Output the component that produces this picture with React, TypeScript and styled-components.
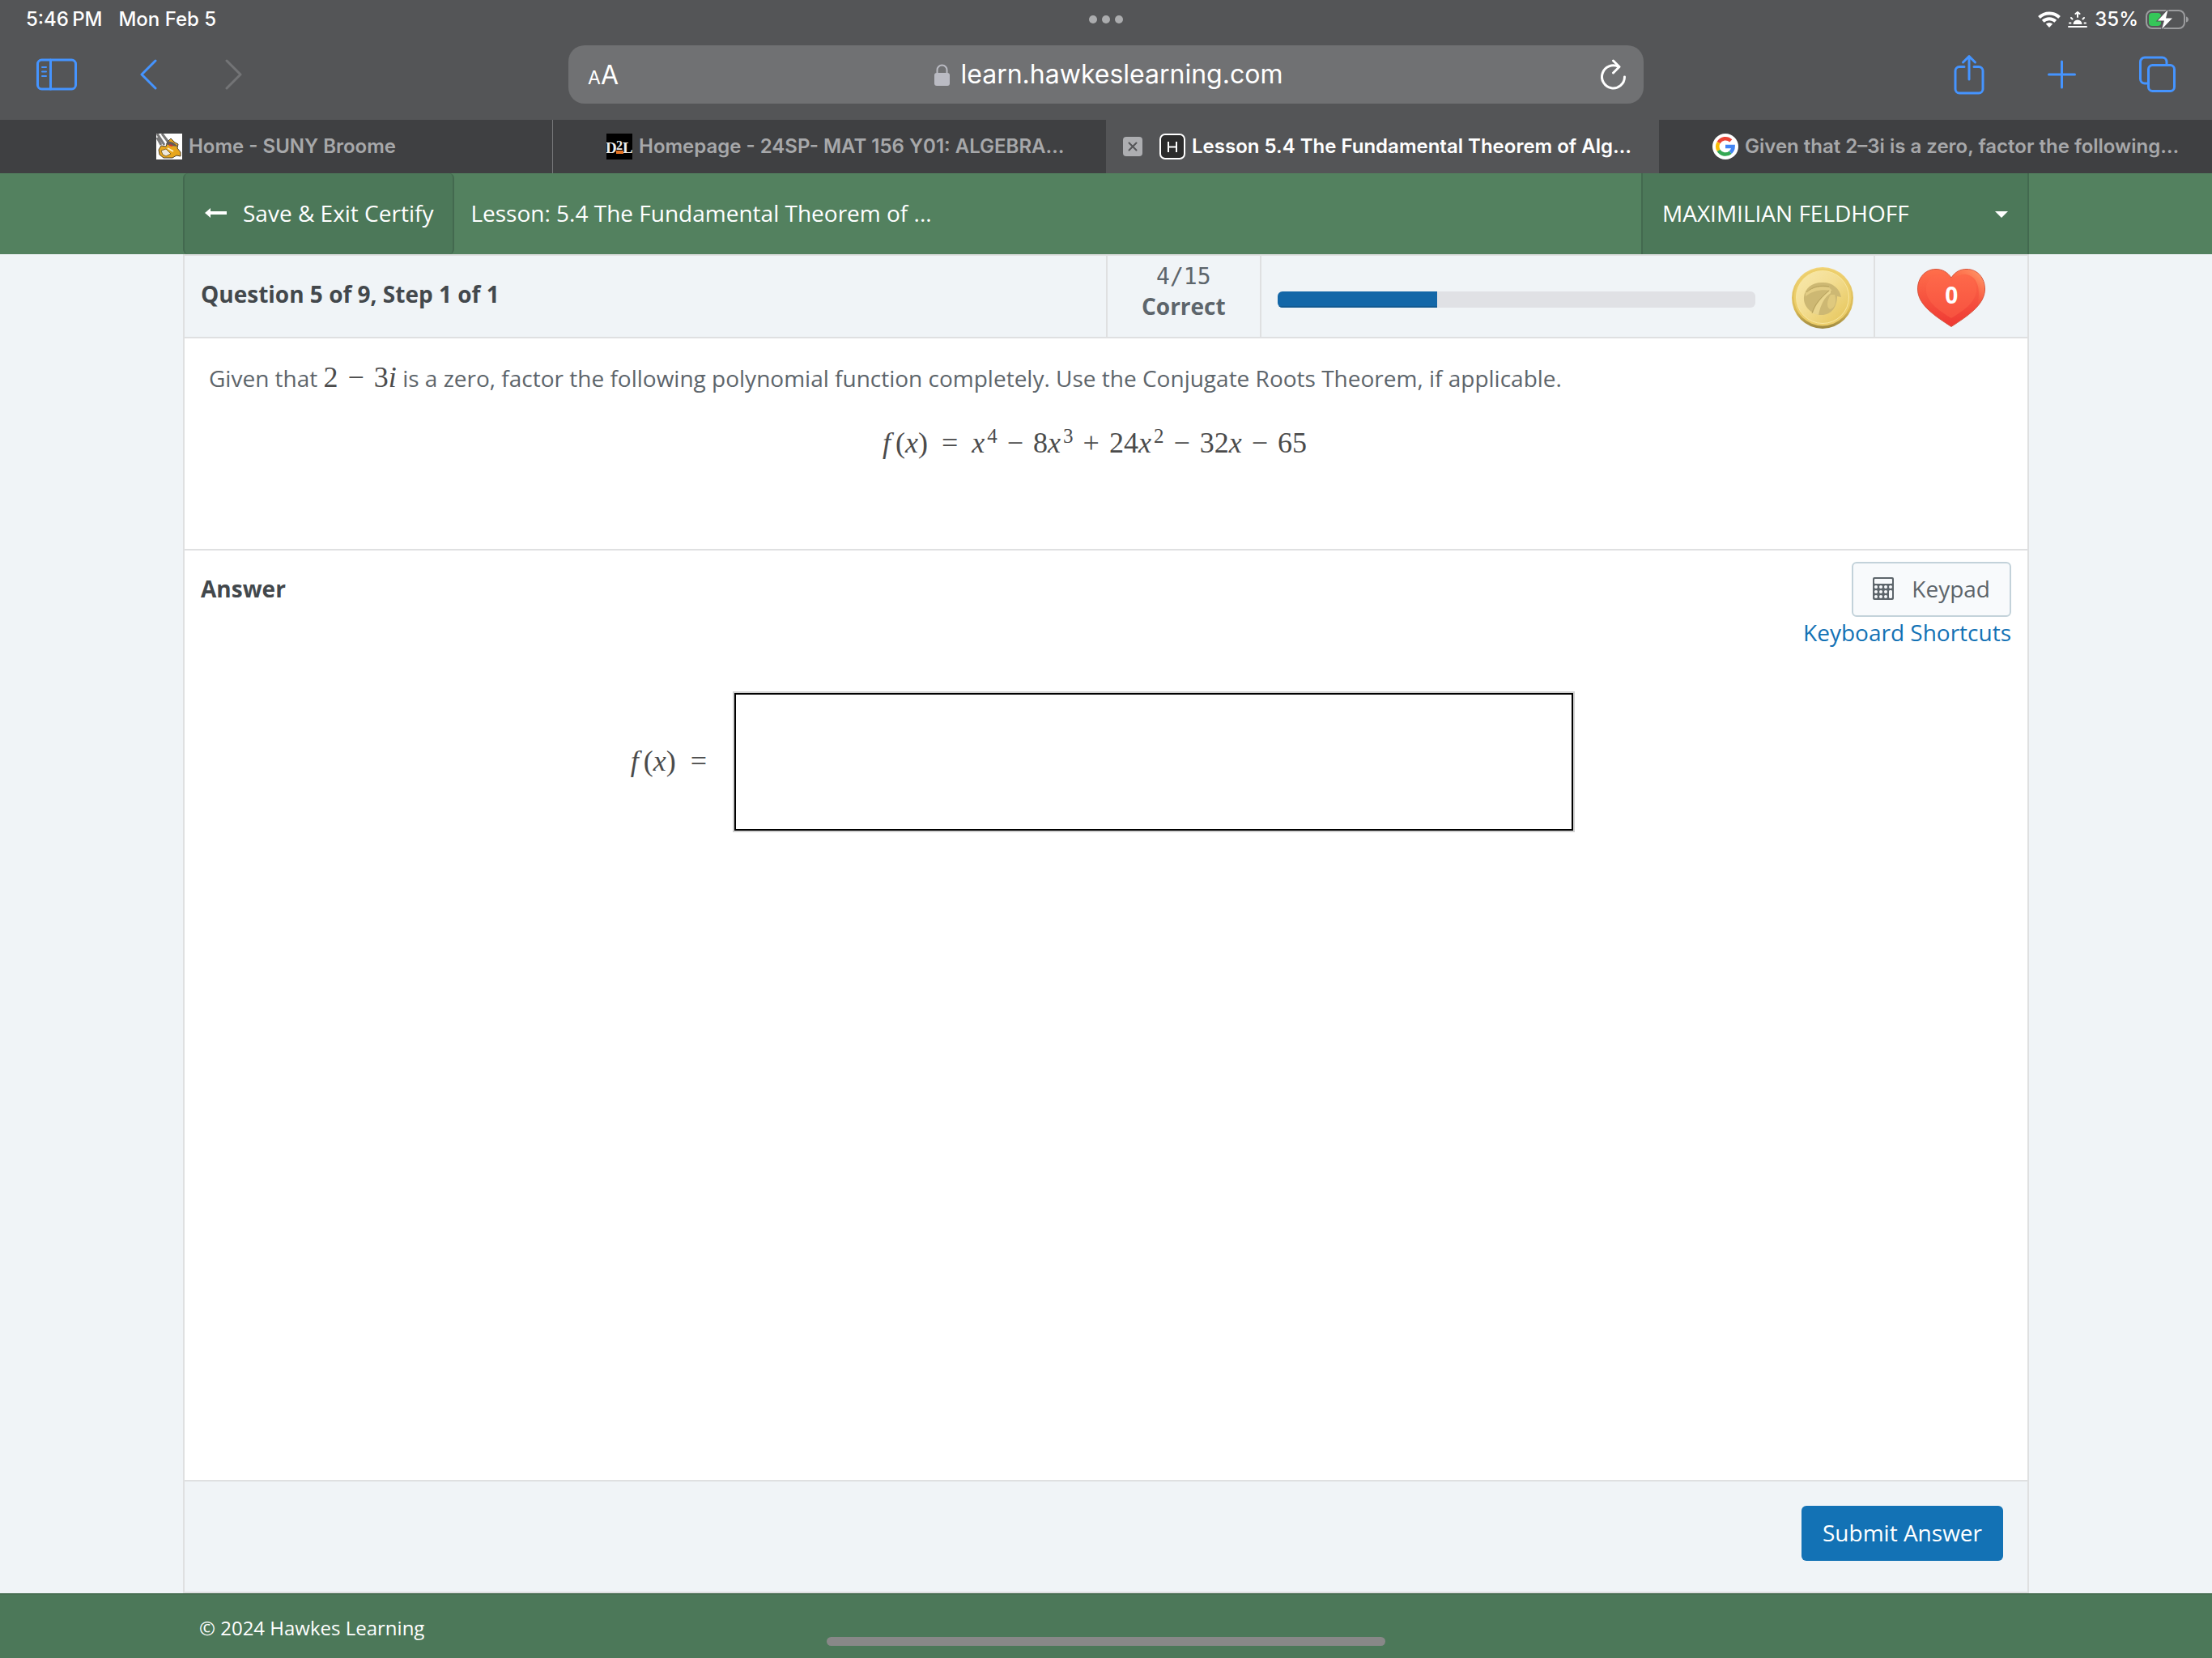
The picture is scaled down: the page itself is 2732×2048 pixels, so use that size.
import React from 'react';
import styled, { createGlobalStyle } from 'styled-components';

const sans = '"Open Sans", "Noto Sans", sans-serif';
const system = 'Inter, "Liberation Sans", sans-serif';
const serif = '"Liberation Serif", "Times New Roman", serif';

const GlobalStyle = createGlobalStyle`
  *, *::before, *::after { box-sizing: border-box; }
  body { margin: 0; background: #f0f4f7; }
  button, input { font: inherit; color: inherit; margin: 0; }
  button { border: 0; padding: 0; background: none; cursor: pointer; }
  svg { display: block; flex: none; }
`;

const Page = styled.div`
  display: flex;
  flex-direction: column;
  min-height: 100vh;
  font: 28px/40px ${sans};
  color: #5d656b;
`;

/* ---------- browser chrome ---------- */

const Chrome = styled.header`
  background: #545557;
  color: #fff;
  font-family: ${system};
`;

const StatusBar = styled.div`
  display: grid;
  grid-template-columns: 1fr auto 1fr;
  align-items: center;
  height: 48px;
  padding: 0 28px;
  font-size: 24px;
  line-height: 32px;
  font-weight: 500;
`;

const StatusGroup = styled.div<{ $end?: boolean }>`
  display: flex;
  align-items: center;
  gap: ${p => (p.$end ? 9 : 20)}px;
  padding-left: 4px;
  justify-content: ${p => (p.$end ? 'flex-end' : 'flex-start')};
`;

const Dots = styled.button`
  display: flex;
  gap: 6px;
`;

const Dot = styled.span`
  width: 10px;
  height: 10px;
  border-radius: 50%;
  background: #abacae;
`;

const Toolbar = styled.nav`
  display: grid;
  grid-template-columns: 702fr 1328fr 702fr;
  align-items: center;
  padding: 8px 0 20px;
`;

const ToolGroup = styled.div<{ $end?: boolean }>`
  display: flex;
  align-items: center;
  gap: 78px;
  padding: 0 45px;
  justify-content: ${p => (p.$end ? 'flex-end' : 'flex-start')};
`;

const ToolButton = styled.button<{ $muted?: boolean }>`
  padding-left: ${p => (p.$muted ? 6 : 0)}px;
  color: ${p => (p.$muted ? '#737476' : '#4594ff')};
`;

const AddressBar = styled.div`
  display: flex;
  align-items: center;
  justify-content: space-between;
  height: 72px;
  padding: 0 22px 0 24px;
  border-radius: 20px;
  background: #707173;
`;

const TextSize = styled.button`
  display: flex;
  align-items: baseline;
  padding-top: 4px;
  font-size: 32px;
  line-height: 40px;
`;

const SmallA = styled.span`
  font-size: 23px;
`;

const Address = styled.label`
  display: flex;
  align-items: center;
  gap: 13px;
`;

const AddressInput = styled.input`
  width: 400px;
  padding: 0;
  border: 0;
  outline: 0;
  background: none;
  font-size: 32px;
  line-height: 44px;
`;

const TabStrip = styled.div`
  display: grid;
  grid-template-columns: repeat(4, minmax(0, 1fr));
  height: 66px;
  background: #3f4042;
`;

const Tab = styled.div<{ $active?: boolean; $centered?: boolean; $divided?: boolean }>`
  display: flex;
  align-items: center;
  justify-content: ${p => (p.$centered ? 'center' : 'flex-start')};
  gap: 21px;
  padding-left: ${p => (p.$centered ? 0 : p.$active ? 21 : 66)}px;
  background: ${p => (p.$active ? '#545557' : 'transparent')};
  color: ${p => (p.$active ? '#fff' : '#a7a8aa')};
  border-right: ${p => (p.$divided ? '1px solid #77787a' : '0')};
`;

const TabLabel = styled.button`
  display: flex;
  align-items: center;
  gap: 8px;
  min-width: 0;
  font-size: 24px;
  line-height: 32px;
  font-weight: 600;
  white-space: nowrap;
`;

const CloseTab = styled.button`
  width: 24px;
  height: 24px;
  border-radius: 4px;
  background: #adaeb1;
  color: #545557;
`;

/* ---------- course header ---------- */

const CourseHeader = styled.header`
  background: #53815f;
  color: #fff;
`;

const Container = styled.div`
  width: 100%;
  max-width: 2280px;
  margin: 0 auto;
`;

const CourseRow = styled(Container)`
  display: flex;
  height: 100px;
`;

const ExitButton = styled.button`
  display: flex;
  align-items: center;
  gap: 20px;
  padding: 0 24px 2px 25px;
  border: 2px solid #43694f;
  border-width: 0 2px;
  border-radius: 6px;
  background: #4c7859;
`;

const LessonTitle = styled.div`
  flex: 1;
  padding: 29px 20px;
`;

const UserMenu = styled.button`
  display: flex;
  align-items: center;
  justify-content: space-between;
  width: 479px;
  padding: 0 24px 2px;
  border: 2px solid #43694f;
  border-width: 0 2px;
  background: #4c7859;
`;

const Caret = styled.span`
  border: 8px solid transparent;
  border-top-color: #fff;
  border-bottom: 0;
  margin-top: 4px;
`;

/* ---------- question card ---------- */

const Card = styled(Container)`
  flex: 1;
  display: flex;
  flex-direction: column;
  border: 2px solid #dfe0e1;
  background: #fff;
`;

const ScoreRow = styled.div`
  display: grid;
  grid-template-columns: 6fr 1fr 4fr 1fr;
  height: 102px;
  border-bottom: 2px solid #dfe0e1;
  background: #f0f4f7;
`;

const Heading = styled.h2`
  margin: 0;
  font-size: 28px;
  line-height: 40px;
  font-weight: 700;
  color: #43484c;
`;

const StepCell = styled.div`
  padding: 27px 20px;
`;

const CountCell = styled.div`
  padding-top: 8px;
  border-left: 2px solid #dfe0e1;
  text-align: center;
  line-height: 36px;
`;

const Count = styled.div`
  font-family: "DejaVu Sans Mono", monospace;
  font-size: 28px;
`;

const ProgressCell = styled.div`
  display: flex;
  align-items: center;
  gap: 45px;
  padding: 4px 25px 0 20px;
  border-left: 2px solid #dfe0e1;
`;

const Track = styled.div`
  flex: 1;
  height: 20px;
  margin-top: 4px;
  border-radius: 6px;
  background: #e0e1e5;
  overflow: hidden;
`;

const Fill = styled.div`
  height: 100%;
  background: #1367a8;
  border-bottom: 2px solid #125a92;
`;

const LivesCell = styled.div`
  display: grid;
  place-items: center;
  padding-top: 4px;
  border-left: 2px solid #dfe0e1;

  & > * { grid-area: 1 / 1; }
`;

const Lives = styled.span`
  padding-bottom: 8px;
  color: #fff;
  font-weight: 700;
`;

const Question = styled.section`
  min-height: 262px;
  padding: 29px 58px 0 30px;
  border-bottom: 2px solid #dfe0e1;
`;

const Prompt = styled.p`
  margin: 0;
`;

const MathText = styled.span`
  font-family: ${serif};
  font-size: 36px;
  line-height: 1;
  color: #4b4b4b;
  white-space: nowrap;
`;

const Formula = styled.div`
  margin-top: 41px;
  text-align: center;
  line-height: 40px;
`;

const Var = styled.i<{ $fn?: boolean }>`
  margin-right: ${p => (p.$fn ? 6 : 0)}px;
`;

const Op = styled.span`
  margin: 0 12px;
`;

const Rel = styled.span`
  margin: 0 17px;
`;

const Power = styled.sup`
  margin-left: 3px;
  font-size: 25px;
  line-height: 0;
  vertical-align: 12px;
`;

const Answer = styled.section`
  flex: 1;
  padding: 14px 20px 40px;
`;

const AnswerTop = styled.div`
  display: flex;
  justify-content: space-between;
`;

const AnswerHeading = styled(Heading)`
  padding-top: 13px;
`;

const Tools = styled.div`
  display: flex;
  flex-direction: column;
  align-items: flex-end;
`;

const KeypadButton = styled.button`
  display: flex;
  align-items: center;
  gap: 22px;
  height: 68px;
  padding: 0 24px 2px;
  border: 2px solid #c3d2da;
  border-radius: 6px;
  background: #f8fafc;
`;

const ShortcutsLink = styled.a`
  color: #1372b5;
  text-decoration: none;
  line-height: 38px;
`;

const AnswerRow = styled.div`
  display: flex;
  align-items: center;
  justify-content: center;
  gap: 32px;
  padding: 54px 16px 0 8px;
`;

const AnswerInput = styled.input`
  flex: 0 1 1040px;
  min-width: 0;
  height: 174px;
  padding: 0 24px;
  border: 2px solid #d2d2d2;
  outline: 2px solid #000;
  outline-offset: -4px;
  background: #fff;
  font: 36px/40px ${serif};
`;

const ActionBar = styled.div`
  display: flex;
  justify-content: flex-end;
  height: 138px;
  padding: 30px 30px 38px;
  border-top: 2px solid #dfe0e1;
  background: #f0f4f7;
`;

const SubmitButton = styled.button`
  padding: 0 26px 2px;
  border-radius: 6px;
  background: #1372b5;
  color: #fff;
`;

const Footer = styled.footer`
  height: 80px;
  border-top: 2px solid #486f53;
  background: #4c7859;
  color: #fff;
  font-size: 24px;
  line-height: 34px;
`;

const FooterRow = styled(Container)`
  position: relative;
  padding: 24px 20px;
`;

const HomeIndicator = styled.div`
  position: absolute;
  left: 50%;
  top: 52px;
  width: 690px;
  height: 11px;
  margin-left: -345px;
  border-radius: 6px;
  background: #888;
`;

/* ---------- drawings ---------- */

const stroke = { fill: 'none', stroke: 'currentColor', strokeLinecap: 'round', strokeLinejoin: 'round' } as const;

const WifiIcon = () => (
  <svg width="28" height="20" viewBox="0 0 28 20" fill="none" stroke="#fff" strokeWidth="4">
    <path d="M1.5 7.5a18 18 0 0 1 25 0" />
    <path d="M6.2 12.3a11.5 11.5 0 0 1 15.6 0" />
    <path d="M14 20l-4.2-4.4a6 6 0 0 1 8.4 0z" fill="#fff" stroke="none" />
  </svg>
);

const SunriseIcon = () => (
  <svg width="24" height="20" viewBox="0 0 24 20" {...stroke} stroke="#fff" strokeWidth="2">
    <path d="M1 19h22M12 1v6M9.5 3L12 .9 14.500 3M4 8l1.500 1.500M20 8l-1.500 1.500M2 14.500h1.500M20.500 14.500H22" />
    <path d="M6.500 16a5.500 5.500 0 0 1 11 0z" fill="#fff" stroke="none" />
  </svg>
);

const BatteryIcon = () => (
  <svg width="54" height="26" viewBox="0 0 54 26">
    <rect x="1" y="2" width="47" height="22" rx="7" fill="none" stroke="#9b9c9e" strokeWidth="2" />
    <path d="M50 9.500c4 1 4 6 0 7z" fill="#9b9c9e" />
    <rect x="4" y="5" width="15" height="16" rx="4" fill="#35c759" />
    <path d="M27.500 1L15 14.500h8L20 25l13-13.500h-8z" fill="#fff" stroke="#545557" strokeWidth="2" paintOrder="stroke" />
  </svg>
);

const SidebarIcon = () => (
  <svg width="50" height="40" viewBox="0 0 50 40" {...stroke} strokeWidth="3">
    <rect x="1.500" y="2" width="47" height="36" rx="5" />
    <path d="M17.500 2v36" />
    <path d="M7 11h5M7 16.500h5M7 22h5" strokeWidth="2" />
  </svg>
);

const ChevronIcon = ({ right }: { right?: boolean }) => (
  <svg width="21" height="38" viewBox="0 0 21 38" {...stroke} strokeWidth="3">
    <path d={right ? 'M2 2l17 17L2 36' : 'M19 2L2 19l17 17'} />
  </svg>
);

const LockIcon = () => (
  <svg width="19" height="27" viewBox="0 0 19 27">
    <rect x="0" y="11" width="19" height="16" rx="3" fill="#babbc3" />
    <path d="M3.500 12V7.500a6 6 0 0 1 12 0V12" fill="none" stroke="#babbc3" strokeWidth="2" />
  </svg>
);

const ReloadIcon = () => (
  <svg width="31" height="38" viewBox="0 0 31 38" {...stroke} strokeWidth="3">
    <path d="M29.500 22A14 14 0 1 1 22 9.500" />
    <path d="M15.500 2l7.500 7.500-7.500 7.500" />
  </svg>
);

const ShareIcon = () => (
  <svg width="38" height="50" viewBox="0 0 38 50" {...stroke} strokeWidth="3">
    <path d="M13 15.500H7a5 5 0 0 0-5 5V43a5 5 0 0 0 5 5h24a5 5 0 0 0 5-5V20.500a5 5 0 0 0-5-5h-6" />
    <path d="M19 31V2.500M11.500 10L19 2.500l7.500 7.500" />
  </svg>
);

const PlusIcon = () => (
  <svg width="35" height="36" viewBox="0 0 35 36" {...stroke} strokeWidth="3">
    <path d="M17.500 2v32M1.500 18h32" />
  </svg>
);

const WindowsIcon = () => (
  <svg width="45" height="46" viewBox="0 0 45 46" {...stroke} strokeWidth="3">
    <rect x="11.500" y="11.500" width="32" height="32" rx="5" />
    <path d="M11 34H7a5.500 5.500 0 0 1-5.500-5.500V7.500A5.500 5.500 0 0 1 7 2h21.500A5.500 5.500 0 0 1 34 7.500v3" />
  </svg>
);

const SunyIcon = () => (
  <svg width="32" height="32" viewBox="0 0 32 32">
    <path d="M0 0h32v32H0z" fill="#fff" />
    <path d="M1 0l9 14M7 0l9 12M1 5l5 9" stroke="#777" strokeWidth="3" />
    <path d="M14 10l4-4 5 5 4 2-1 5 4 5v5l-5-1-5 3H9l-5-4-1-6 3-5 6 1z" fill="#e7a61d" stroke="#4e4331" strokeWidth="1" />
    <path d="M14 9l7 2 6 5-9-1-6-2z" fill="#625c58" />
    <path d="M16 14l4 1" stroke="#c33" strokeWidth="2" />
    <path d="M6 21l6-2 6 6-6 3-4-2z" fill="#eee8dc" stroke="#8a6a22" />
    <path d="M14 18l7 4" stroke="#fff3cc" strokeWidth="2" />
  </svg>
);

const D2LIcon = () => (
  <svg width="32" height="32" viewBox="0 0 32 32">
    <path d="M0 0h32v32H0z" />
    <g fill="#eee" fontFamily="Liberation Serif, serif" fontWeight="700">
      <text x="-1" y="24" fontSize="19">D</text>
      <text x="12" y="20" fontSize="16">2</text>
      <text x="20" y="24" fontSize="19">L</text>
    </g>
    <path d="M12 21h9v4h-9z" fill="#e67525" />
  </svg>
);

const HawkesIcon = () => (
  <svg width="32" height="32" viewBox="0 0 32 32">
    <rect x="1" y="1" width="30" height="30" rx="6" fill="#2c2c2c" stroke="#fff" strokeWidth="2" />
    <path d="M11 10v13M21 10v13M11 16.500h10" stroke="#fff" strokeWidth="2" />
  </svg>
);

const GoogleIcon = () => (
  <svg width="32" height="32" viewBox="0 0 32 32">
    <circle cx="16" cy="16" r="16" fill="#fff" />
    <g fill="none" strokeWidth="4.500">
      <path d="M22.800 8.900A9.700 9.700 0 0 0 7.600 11.200" stroke="#ea4335" />
      <path d="M7.600 11.200a9.700 9.700 0 0 0 0 9.700" stroke="#fbbc05" />
      <path d="M7.600 20.900a9.700 9.700 0 0 0 14.700 2.300" stroke="#34a853" />
      <path d="M22.300 23.200a9.700 9.700 0 0 0 3.300-7.200H16" stroke="#4285f4" />
    </g>
  </svg>
);

const CloseIcon = () => (
  <svg width="24" height="24" viewBox="0 0 24 24" {...stroke} strokeWidth="2">
    <path d="M7.500 7.500l9 9M16.500 7.500l-9 9" />
  </svg>
);

const ArrowIcon = () => (
  <svg width="27" height="14" viewBox="0 0 27 14" fill="#fff">
    <path d="M0 7l7-6v4h20v4H7v4z" />
  </svg>
);

const CalculatorIcon = () => (
  <svg width="26" height="28" viewBox="0 0 26 28">
    <rect width="26" height="28" rx="2" fill="#5d656b" />
    <rect x="2" y="2" width="22" height="6" rx="1" fill="#f8fafc" />
    <g fill="#f8fafc">
      {[12, 18, 24].map(y => [4, 10, 16, 22].map(x => (
        <circle key={`${x}-${y}`} cx={x} cy={y} r="2" />
      )))}
      <rect x="20" y="16" width="4" height="10" rx="2" />
    </g>
  </svg>
);

const CoinIcon = () => (
  <svg width="76" height="76" viewBox="0 0 76 76">
    <defs>
      <linearGradient id="coinFace" x1="0" y1="0" x2="1" y2="1">
        <stop offset="0" stopColor="#f8e9ae" />
        <stop offset=".45" stopColor="#f3dd91" />
        <stop offset="1" stopColor="#e5c456" />
      </linearGradient>
      <linearGradient id="coinRim" x1="0" y1="0" x2="0" y2="1">
        <stop offset="0" stopColor="#f2d57a" />
        <stop offset=".7" stopColor="#d9b955" />
        <stop offset="1" stopColor="#9c873f" />
      </linearGradient>
    </defs>
    <circle cx="38" cy="38" r="38" fill="url(#coinRim)" />
    <circle cx="38" cy="37" r="35.500" fill="#ecce6b" />
    <circle cx="38" cy="37" r="32.500" fill="url(#coinFace)" stroke="#f9e7a0" strokeWidth="1" />
    <path d="M15 37c1-12 12-19 24-18 11 0 20 7 22 18l-5-1c0 13-7 23-19 23-12 0-23-10-22-22z" fill="#cdb873" />
    <path d="M17 31c7-6 17-8 29-6l4 4c-14-2-24 0-33 7z" fill="#e2cc84" />
    <path d="M48 28C38 36 29 46 26 57l7 2c2-11 7-22 15-27z" fill="#e9d58e" />
    <path d="M53 34c3 9 0 17-6 18-5-3-3-12 1-18z" fill="#dfc97e" />
    <path d="M18 31c8-7 18-9 28-7M25 57c3-11 11-20 21-28" fill="none" stroke="#b7a25c" strokeWidth="1" />
  </svg>
);

const HeartIcon = () => (
  <svg width="84" height="72" viewBox="0 0 84 72">
    <defs>
      <linearGradient id="heartFace" x1="0" y1="0" x2="0" y2="1">
        <stop offset="0" stopColor="#ff6f4b" />
        <stop offset="1" stopColor="#ee3833" />
      </linearGradient>
      <linearGradient id="heartShine" x1="0" y1="1" x2="1" y2="0">
        <stop offset=".4" stopColor="#ff7a50" stopOpacity="0" />
        <stop offset="1" stopColor="#ffa574" />
      </linearGradient>
    </defs>
    <path d="M42 11C48 2 55 .500 61 .500 75 .500 83.500 12 83.500 25 83.500 45 61 59 42 71.500 23 59 .500 45 .500 25 .500 12 9 .500 23 .500 31 .500 37 4 42 11z" fill="url(#heartFace)" stroke="#d4563f" strokeWidth="1" />
    <path d="M42 11C48 2 55 1 61 1 75 1 83 12 83 25c0 8-4 15-9 21 5-20 1-36-13-39-7-1-13 4-19 4z" fill="url(#heartShine)" />
    <path d="M42 16c6-7 12-9 18-8 9 2 14 9 13 20-2 15-18 25-31 33-13-8-29-18-31-33-1-11 4-18 13-20 7-1 13 1 18 8z" fill="#ff694b" opacity=".45" />
  </svg>
);

/* ---------- content ---------- */

const tabs = [
  { icon: <SunyIcon />, title: 'Home - SUNY Broome', centered: true, divided: true },
  { icon: <D2LIcon />, title: 'Homepage - 24SP- MAT 156 Y01: ALGEBRA…' },
  { icon: <HawkesIcon />, title: 'Lesson 5.4 The Fundamental Theorem of Alg…', active: true },
  { icon: <GoogleIcon />, title: 'Given that 2–3i is a zero, factor the following…' },
];

const FOfX = () => (
  <>
    <Var $fn>f</Var>(<Var>x</Var>)
  </>
);

const progress = 5 / 15;

export default function App() {
  return (
    <Page>
      <GlobalStyle />
      <Chrome>
        <StatusBar>
          <StatusGroup>
            <span>5:46{'\u2009'}PM</span>
            <span>Mon Feb 5</span>
          </StatusGroup>
          <Dots aria-label="Multitasking">
            <Dot />
            <Dot />
            <Dot />
          </Dots>
          <StatusGroup $end>
            <WifiIcon />
            <SunriseIcon />
            <span>35%</span>
            <BatteryIcon />
          </StatusGroup>
        </StatusBar>
        <Toolbar>
          <ToolGroup>
            <ToolButton aria-label="Show sidebar"><SidebarIcon /></ToolButton>
            <ToolButton aria-label="Back"><ChevronIcon /></ToolButton>
            <ToolButton aria-label="Forward" $muted><ChevronIcon right /></ToolButton>
          </ToolGroup>
          <AddressBar>
            <TextSize aria-label="Text size"><SmallA>A</SmallA>A</TextSize>
            <Address>
              <LockIcon />
              <AddressInput aria-label="Address" defaultValue="learn.hawkeslearning.com" />
            </Address>
            <button aria-label="Reload"><ReloadIcon /></button>
          </AddressBar>
          <ToolGroup $end>
            <ToolButton aria-label="Share"><ShareIcon /></ToolButton>
            <ToolButton aria-label="New tab"><PlusIcon /></ToolButton>
            <ToolButton aria-label="Tab overview"><WindowsIcon /></ToolButton>
          </ToolGroup>
        </Toolbar>
        <TabStrip>
          {tabs.map(tab => (
            <Tab key={tab.title} $active={tab.active} $centered={tab.centered} $divided={tab.divided}>
              {tab.active && <CloseTab aria-label="Close tab"><CloseIcon /></CloseTab>}
              <TabLabel>
                {tab.icon}
                <span>{tab.title}</span>
              </TabLabel>
            </Tab>
          ))}
        </TabStrip>
      </Chrome>

      <CourseHeader>
        <CourseRow>
          <ExitButton>
            <ArrowIcon />
            Save &amp; Exit Certify
          </ExitButton>
          <LessonTitle>Lesson: 5.4 The Fundamental Theorem of ...</LessonTitle>
          <UserMenu aria-haspopup="menu">
            MAXIMILIAN FELDHOFF
            <Caret />
          </UserMenu>
        </CourseRow>
      </CourseHeader>

      <Card as="main">
        <ScoreRow>
          <StepCell>
            <Heading>Question 5 of 9, Step 1 of 1</Heading>
          </StepCell>
          <CountCell>
            <Count>4/15</Count>
            <strong>Correct</strong>
          </CountCell>
          <ProgressCell>
            <Track role="progressbar" aria-label="Progress" aria-valuemin={0} aria-valuemax={15} aria-valuenow={5}>
              <Fill style={{ width: `${progress * 100}%` }} />
            </Track>
            <CoinIcon />
          </ProgressCell>
          <LivesCell>
            <HeartIcon />
            <Lives>0</Lives>
          </LivesCell>
        </ScoreRow>

        <Question>
          <Prompt>
            Given that <MathText>2<Op>−</Op>3<Var>i</Var></MathText> is a zero, factor the following polynomial
            function completely. Use the Conjugate Roots Theorem, if applicable.
          </Prompt>
          <Formula>
            <MathText>
              <FOfX /><Rel>=</Rel><Var>x</Var><Power>4</Power><Op>−</Op>8<Var>x</Var><Power>3</Power>
              <Op>+</Op>24<Var>x</Var><Power>2</Power><Op>−</Op>32<Var>x</Var><Op>−</Op>65
            </MathText>
          </Formula>
        </Question>

        <Answer>
          <AnswerTop>
            <AnswerHeading>Answer</AnswerHeading>
            <Tools>
              <KeypadButton>
                <CalculatorIcon />
                Keypad
              </KeypadButton>
              <ShortcutsLink href="#shortcuts">Keyboard Shortcuts</ShortcutsLink>
            </Tools>
          </AnswerTop>
          <AnswerRow>
            <label htmlFor="answer">
              <MathText><FOfX />&nbsp; =</MathText>
            </label>
            <AnswerInput id="answer" type="text" />
          </AnswerRow>
        </Answer>

        <ActionBar>
          <SubmitButton>Submit Answer</SubmitButton>
        </ActionBar>
      </Card>

      <Footer>
        <FooterRow>
          © 2024 Hawkes Learning
          <HomeIndicator />
        </FooterRow>
      </Footer>
    </Page>
  );
}
